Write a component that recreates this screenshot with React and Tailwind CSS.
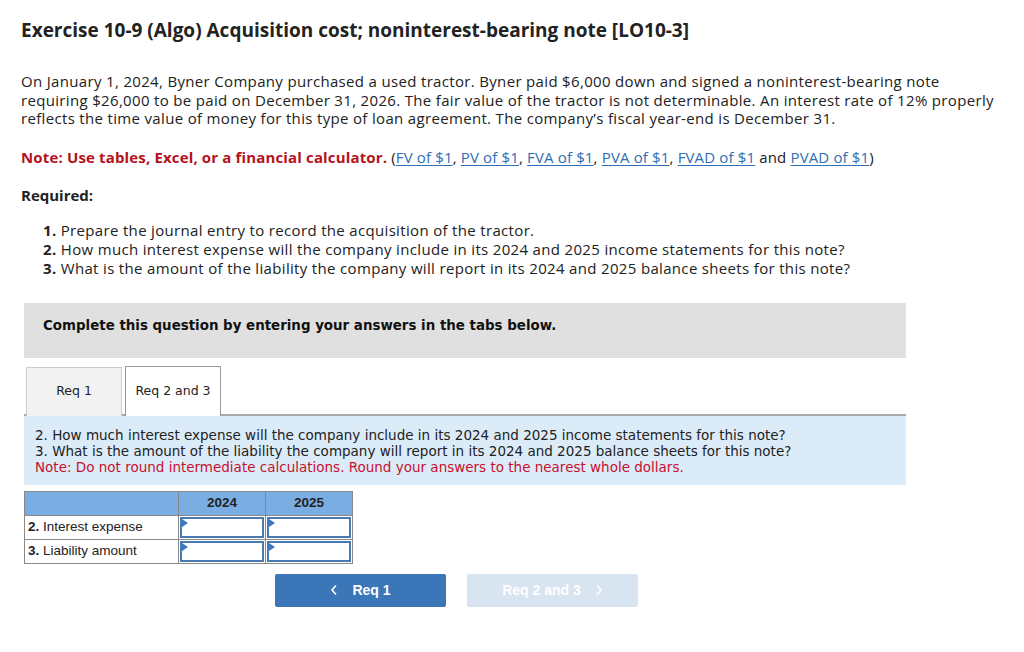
import React from 'react';

const sans = { fontFamily: '"Open Sans", Lato, sans-serif' };

const Link = ({ children }) => (
  <a href="#" className="text-[#2f6db5] underline underline-offset-2">
    {children}
  </a>
);

const InputCell = () => (
  <td className="p-0 border border-[#888]">
    <div className="relative h-[21px] m-[1px] border-2 border-[#4a78b0] bg-white">
      <span className="absolute left-0 top-0 w-0 h-0 border-t-[4px] border-b-[4px] border-l-[6px] border-t-transparent border-b-transparent border-l-[#3a76c2]"></span>
    </div>
  </td>
);

export default function App() {
  return (
    <div className="min-h-screen bg-white text-[#222]" style={sans}>
      <div className="pt-[18px] px-[21px]">
        <h1 className="text-[19px] font-bold leading-[24px] text-[#222]">
          Exercise 10-9 (Algo) Acquisition cost; noninterest-bearing note [LO10-3]
        </h1>

        <p className="mt-[30px] text-[15px] leading-[18.5px] tracking-[0.33px]">
          On January 1, 2024, Byner Company purchased a used tractor. Byner paid $6,000 down and signed a noninterest-bearing note
          <br />
          requiring $26,000 to be paid on December 31, 2026. The fair value of the tractor is not determinable. An interest rate of 12% properly
          <br />
          reflects the time value of money for this type of loan agreement. The company’s fiscal year-end is December 31.
        </p>

        <p className="mt-[20px] text-[15px] leading-[18.5px] tracking-[0.15px]">
          <span className="font-bold text-[#b5121b]">Note: Use tables, Excel, or a financial calculator.</span>{' '}
          (<Link>FV of $1</Link>, <Link>PV of $1</Link>, <Link>FVA of $1</Link>, <Link>PVA of $1</Link>,{' '}
          <Link>FVAD of $1</Link> and <Link>PVAD of $1</Link>)
        </p>

        <p className="mt-[20px] text-[15px] leading-[18.5px] font-bold">Required:</p>

        <ol className="mt-[16px] pl-[22px] text-[15px] leading-[19px] tracking-[0.33px]">
          <li><b>1.</b> Prepare the journal entry to record the acquisition of the tractor.</li>
          <li><b>2.</b> How much interest expense will the company include in its 2024 and 2025 income statements for this note?</li>
          <li><b>3.</b> What is the amount of the liability the company will report in its 2024 and 2025 balance sheets for this note?</li>
        </ol>
      </div>

      <div className="ml-[24px] w-[882px] mt-[25px]" style={{ fontFamily: '"DejaVu Sans", Verdana, sans-serif' }}>
        <div className="bg-[#e0e0e0] h-[55px] pl-[19px] pt-[15px]">
          <p className="text-[13.4px] font-bold leading-[16px] text-[#111]">
            Complete this question by entering your answers in the tabs below.
          </p>
        </div>

        <div className="mt-[8px] flex items-end h-[50px] border-b-2 border-[#aaa]">
          <div className="ml-[2px] w-[96px] h-[49px] -mb-[2px] bg-[#f2f2f2] border border-[#ccc] border-b-0 flex items-center justify-center text-[12.5px] text-[#222]">
            Req 1
          </div>
          <div className="ml-[3px] w-[96px] h-[50px] -mb-[2px] bg-white border border-[#999] border-b-0 flex items-center justify-center text-[12.5px] text-[#222]">
            Req 2 and 3
          </div>
        </div>

        <div className="bg-[#dbebf8] h-[69px] pl-[11px] pt-[11px] text-[13.5px] leading-[16px] text-[#222]">
          <p>2. How much interest expense will the company include in its 2024 and 2025 income statements for this note?</p>
          <p>3. What is the amount of the liability the company will report in its 2024 and 2025 balance sheets for this note?</p>
          <p className="text-[#c8102e]">Note: Do not round intermediate calculations. Round your answers to the nearest whole dollars.</p>
        </div>

        <table
          className="mt-[6px] border-collapse text-[13.5px]"
          style={{ fontFamily: '"Liberation Sans", Arial, sans-serif' }}
        >
          <thead>
            <tr className="bg-[#7aaee3] h-[24px]">
              <th className="w-[154px] border border-[#888]"></th>
              <th className="w-[87px] border border-[#888] font-bold text-[#222]">2024</th>
              <th className="w-[87px] border border-[#888] font-bold text-[#222]">2025</th>
            </tr>
          </thead>
          <tbody>
            <tr className="h-[24px]">
              <td className="border border-[#888] pl-[3px] text-[#222]"><b>2.</b> Interest expense</td>
              <InputCell />
              <InputCell />
            </tr>
            <tr className="h-[24px]">
              <td className="border border-[#888] pl-[3px] text-[#222]"><b>3.</b> Liability amount</td>
              <InputCell />
              <InputCell />
            </tr>
          </tbody>
        </table>

        <div
          className="mt-[10px] ml-[251px] flex gap-[21px] text-[14px] font-bold text-white"
          style={{ fontFamily: '"Liberation Sans", Arial, sans-serif' }}
        >
          <button className="w-[171px] h-[33px] rounded-[2px] bg-[#3a76b8] flex items-center justify-center gap-[14px]">
            <svg width="8" height="12" viewBox="0 0 8 12" fill="none" stroke="white" strokeWidth="1.6">
              <path d="M6 1.5 L2 6 L6 10.5" />
            </svg>
            <span>Req 1</span>
          </button>
          <button className="w-[171px] h-[33px] rounded-[2px] bg-[#d9e4f1] flex items-center justify-center gap-[14px]">
            <span>Req 2 and 3</span>
            <svg width="8" height="12" viewBox="0 0 8 12" fill="none" stroke="white" strokeWidth="1.6">
              <path d="M2 1.5 L6 6 L2 10.5" />
            </svg>
          </button>
        </div>
      </div>
    </div>
  );
}
